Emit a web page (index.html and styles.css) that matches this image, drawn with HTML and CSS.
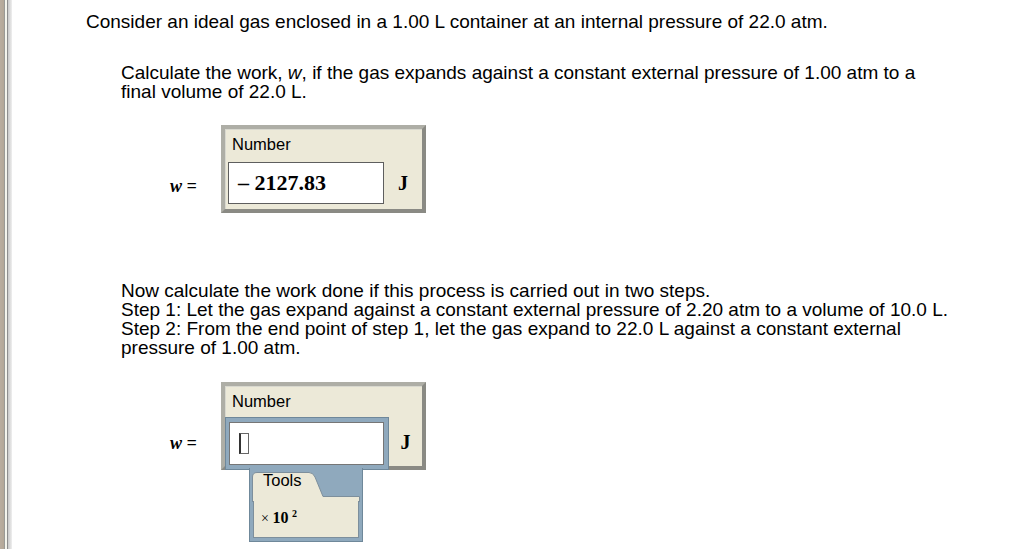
FILE: index.html
```html
<!DOCTYPE html>
<html>
<head>
<meta charset="utf-8">
<link rel="stylesheet" href="styles.css">
</head>
<body>
<div class="page">
  <div class="edge"></div>
  <div class="content">
    <p class="intro">Consider an ideal gas enclosed in a 1.00 L container at an internal pressure of 22.0 atm.</p>
    <p class="part">Calculate the work, <i>w</i>, if the gas expands against a constant external pressure of 1.00 atm to a<br>final volume of 22.0 L.</p>
    <div class="answer answer-one">
      <span class="var">w =</span>
      <div class="box">
        <div class="box-label">Number</div>
        <div class="box-row">
          <div class="field"><span class="value">– 2127.83</span></div>
          <span class="unit">J</span>
        </div>
      </div>
    </div>
    <p class="part part-two">Now calculate the work done if this process is carried out in two steps.<br>Step 1: Let the gas expand against a constant external pressure of 2.20 atm to a volume of 10.0 L.<br>Step 2: From the end point of step 1, let the gas expand to 22.0 L against a constant external<br>pressure of 1.00 atm.</p>
    <div class="answer answer-two">
      <span class="var">w =</span>
      <div class="box">
        <div class="box-label">Number</div>
        <div class="box-row">
          <div class="focus-frame">
            <div class="field"><span class="caret"></span></div>
          </div>
          <span class="unit">J</span>
        </div>
        <div class="tools">
          <svg class="tools-tab" width="114" height="34" viewBox="0 0 114 34">
            <path d="M3.5 34 V9 Q3.5 4.5 8 4.5 H60 Q64 4.5 66 9 L74 28.5 H110.5 V34" fill="#ece9d8" stroke="#7d8f9c" stroke-width="1"/>
          </svg>
          <span class="tools-label">Tools</span>
          <div class="tools-panel">× <b>10</b> <sup>2</sup></div>
        </div>
      </div>
    </div>
  </div>
</div>
</body>
</html>
```
FILE: styles.css
```css
* { box-sizing: border-box; }
html, body { margin: 0; padding: 0; background: #fff; }
body { font-family: "Liberation Sans", Arial, sans-serif; color: #000; }
.page { display: flex; width: 1024px; height: 549px; overflow: hidden; }
.edge {
  width: 12px; flex: none;
  background: linear-gradient(to right, #b9ad9f 0, #b3a797 4px, #9a9a96 4px, #9a9a96 5px, #f4f4ec 5px, #f4f4ec 7px, #8f8f8f 7px, #8f8f8f 8px, #c8c8c8 8px, #dcdcdc 10px, #efefef 12px);
}
.content { flex: 1; padding-left: 74px; }
p { margin: 0; font-size: 19px; line-height: 19px; }
.intro { margin-top: 12px; }
.part { margin-top: 32px; margin-left: 35px; }
.part-two { margin-top: 68px; }
.answer { display: flex; align-items: flex-start; margin-left: 84px; }
.answer-one { margin-top: 24px; }
.answer-two { margin-top: 25px; }
.var {
  font-family: "Liberation Serif", "Times New Roman", serif;
  font-style: italic; font-weight: bold; font-size: 18px;
  width: 51px; margin-top: 51px;
}
.box {
  position: relative;
  width: 205px; height: 88px;
  background: #ece9d8;
  border: 4px solid;
  border-color: #aeaea6 #8a8a84 #8a8a84 #aeaea6;
  box-shadow: inset 1px 1px 0 #d8d8cf;
}
.box-label { font-size: 16.5px; margin: 6px 0 0 7px; height: 27px; }
.box-row { display: flex; align-items: center; }
.field {
  width: 156px; height: 42px; margin-left: 3px;
  background: #fff; border: 1px solid #5e5e5e;
  display: flex; align-items: center; padding-left: 9px;
}
.value { font-family: "Liberation Serif", "Times New Roman", serif; font-weight: bold; font-size: 22px; }
.unit {
  font-family: "Liberation Serif", "Times New Roman", serif; font-weight: bold; font-size: 20px;
  flex: 1; text-align: center;
}
.focus-frame {
  background: #8fa9bd; border: 1px solid #6f889a;
  padding: 4px 4px 4px 3px; margin-top: -2px;
}
.answer-two .field { margin-left: 0; border-color: #767676; width: 155px; height: 43px; padding-left: 9px; }
.caret { display: block; width: 10px; height: 21px; border: 1px solid #666; border-left: 2px solid #333; }
.answer-two .unit { margin-top: -4px; }
.tools {
  position: absolute; left: 24px; top: 82px;
  width: 114px; height: 74px;
  background: #8fa9bd; border: 1px solid #6f889a; border-top: none;
}
.tools-tab { position: absolute; left: -1px; top: 0; }
.tools-label { position: absolute; left: 13px; top: 3px; font-size: 16.5px; }
.tools-panel {
  position: absolute; left: 3px; top: 33px; width: 106px; height: 37px;
  background: #ece9d8; border: 1px solid #7d8f9c; border-top: none;
  font-family: "Liberation Serif", "Times New Roman", serif; font-size: 14px;
  padding: 8px 0 0 7px; line-height: 18px;
}
.tools-panel b { font-size: 16px; }
.tools-panel sup { font-size: 10px; font-weight: bold; vertical-align: 6px; line-height: 0; }
```
